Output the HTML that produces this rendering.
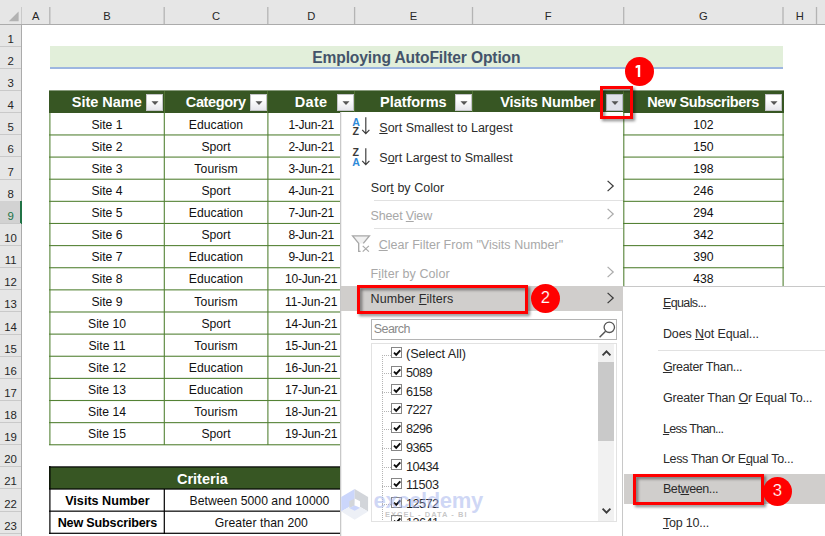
<!DOCTYPE html>
<html><head><meta charset="utf-8"><title>AutoFilter</title>
<style>
html,body{margin:0;padding:0;background:#fff;}
#s{position:relative;width:825px;height:536px;overflow:hidden;background:#fff;font-family:"Liberation Sans",sans-serif;}
#s div,#s span,#s svg{position:absolute;display:block;}
#s span{white-space:pre;transform-origin:0 50%;}
#s u{text-decoration:underline;text-underline-offset:0.6px;text-decoration-thickness:1px;}
</style></head><body><div id="s">
<div style="left:0.00px;top:0.00px;width:825.00px;height:24.00px;background:#e6e6e6"></div>
<div style="left:0.00px;top:24.00px;width:21.00px;height:512.00px;background:#e6e6e6"></div>
<div style="left:0.00px;top:24.00px;width:825.00px;height:1.00px;background:#ababab"></div>
<div style="left:21.00px;top:7.00px;width:1.00px;height:17.00px;background:#c9c9c9"></div>
<div style="left:21.00px;top:24.00px;width:1.00px;height:512.00px;background:#ababab"></div>
<svg style="left:8px;top:10px" width="12" height="12" viewBox="0 0 12 12"><path d="M10.6 1.4V11.2H0.8Z" fill="#b2b2b2"/></svg>
<div style="left:49.00px;top:7.00px;width:1.00px;height:17.00px;background:rgba(180,180,180,0.85)"></div>
<div style="left:50.00px;top:7.00px;width:1.00px;height:17.00px;background:rgba(180,180,180,0.45)"></div>
<span style="left:32.01px;top:11.02px;font-size:11.2px;line-height:11.2px;font-weight:normal;color:#262626;">A</span>
<div style="left:163.00px;top:7.00px;width:1.00px;height:17.00px;background:rgba(180,180,180,0.45)"></div>
<div style="left:164.00px;top:7.00px;width:1.00px;height:17.00px;background:rgba(180,180,180,0.85)"></div>
<span style="left:103.26px;top:11.02px;font-size:11.2px;line-height:11.2px;font-weight:normal;color:#262626;">B</span>
<div style="left:267.00px;top:7.00px;width:1.00px;height:17.00px;background:rgba(180,180,180,0.85)"></div>
<div style="left:268.00px;top:7.00px;width:1.00px;height:17.00px;background:rgba(180,180,180,0.45)"></div>
<span style="left:211.96px;top:11.02px;font-size:11.2px;line-height:11.2px;font-weight:normal;color:#262626;">C</span>
<div style="left:353.00px;top:7.00px;width:1.00px;height:17.00px;background:rgba(180,180,180,0.05)"></div>
<div style="left:354.00px;top:7.00px;width:1.00px;height:17.00px;background:rgba(180,180,180,1.00)"></div>
<div style="left:355.00px;top:7.00px;width:1.00px;height:17.00px;background:rgba(180,180,180,0.25)"></div>
<span style="left:307.16px;top:11.02px;font-size:11.2px;line-height:11.2px;font-weight:normal;color:#262626;">D</span>
<div style="left:471.00px;top:7.00px;width:1.00px;height:17.00px;background:rgba(180,180,180,0.15)"></div>
<div style="left:472.00px;top:7.00px;width:1.00px;height:17.00px;background:rgba(180,180,180,1.00)"></div>
<div style="left:473.00px;top:7.00px;width:1.00px;height:17.00px;background:rgba(180,180,180,0.15)"></div>
<span style="left:409.81px;top:11.02px;font-size:11.2px;line-height:11.2px;font-weight:normal;color:#262626;">E</span>
<div style="left:623.00px;top:7.00px;width:1.00px;height:17.00px;background:rgba(180,180,180,0.95)"></div>
<div style="left:624.00px;top:7.00px;width:1.00px;height:17.00px;background:rgba(180,180,180,0.35)"></div>
<span style="left:544.68px;top:11.02px;font-size:11.2px;line-height:11.2px;font-weight:normal;color:#262626;">F</span>
<div style="left:782.00px;top:7.00px;width:1.00px;height:17.00px;background:rgba(180,180,180,0.65)"></div>
<div style="left:783.00px;top:7.00px;width:1.00px;height:17.00px;background:rgba(180,180,180,0.65)"></div>
<span style="left:698.99px;top:11.02px;font-size:11.2px;line-height:11.2px;font-weight:normal;color:#262626;">G</span>
<div style="left:815.00px;top:7.00px;width:1.00px;height:17.00px;background:rgba(180,180,180,0.15)"></div>
<div style="left:816.00px;top:7.00px;width:1.00px;height:17.00px;background:rgba(180,180,180,1.00)"></div>
<div style="left:817.00px;top:7.00px;width:1.00px;height:17.00px;background:rgba(180,180,180,0.15)"></div>
<span style="left:795.71px;top:11.02px;font-size:11.2px;line-height:11.2px;font-weight:normal;color:#262626;">H</span>
<div style="left:0.00px;top:46.00px;width:21.00px;height:1.00px;background:#c9c9c9"></div>
<span style="left:7.43px;top:33.85px;font-size:11.4px;line-height:11.4px;font-weight:normal;color:#262626;">1</span>
<div style="left:0.00px;top:68.00px;width:21.00px;height:1.00px;background:#c9c9c9"></div>
<span style="left:7.43px;top:55.85px;font-size:11.4px;line-height:11.4px;font-weight:normal;color:#262626;">2</span>
<div style="left:0.00px;top:90.00px;width:21.00px;height:1.00px;background:#c9c9c9"></div>
<span style="left:7.43px;top:77.85px;font-size:11.4px;line-height:11.4px;font-weight:normal;color:#262626;">3</span>
<div style="left:0.00px;top:112.00px;width:21.00px;height:1.00px;background:#c9c9c9"></div>
<span style="left:7.43px;top:99.85px;font-size:11.4px;line-height:11.4px;font-weight:normal;color:#262626;">4</span>
<div style="left:0.00px;top:134.00px;width:21.00px;height:1.00px;background:#c9c9c9"></div>
<span style="left:7.43px;top:121.85px;font-size:11.4px;line-height:11.4px;font-weight:normal;color:#262626;">5</span>
<div style="left:0.00px;top:156.00px;width:21.00px;height:1.00px;background:#c9c9c9"></div>
<span style="left:7.43px;top:143.85px;font-size:11.4px;line-height:11.4px;font-weight:normal;color:#262626;">6</span>
<div style="left:0.00px;top:179.00px;width:21.00px;height:1.00px;background:#c9c9c9"></div>
<span style="left:7.43px;top:166.85px;font-size:11.4px;line-height:11.4px;font-weight:normal;color:#262626;">7</span>
<div style="left:0.00px;top:201.00px;width:21.00px;height:1.00px;background:#c9c9c9"></div>
<span style="left:7.43px;top:188.85px;font-size:11.4px;line-height:11.4px;font-weight:normal;color:#262626;">8</span>
<div style="left:0.00px;top:201.00px;width:20.00px;height:22.00px;background:#d2d2d2"></div>
<div style="left:20.00px;top:201.00px;width:2.00px;height:23.00px;background:#217346"></div>
<div style="left:0.00px;top:223.00px;width:21.00px;height:1.00px;background:#c9c9c9"></div>
<span style="left:7.43px;top:210.85px;font-size:11.4px;line-height:11.4px;font-weight:normal;color:#217346;">9</span>
<div style="left:0.00px;top:245.00px;width:21.00px;height:1.00px;background:#c9c9c9"></div>
<span style="left:4.26px;top:232.85px;font-size:11.4px;line-height:11.4px;font-weight:normal;color:#262626;">10</span>
<div style="left:0.00px;top:267.00px;width:21.00px;height:1.00px;background:#c9c9c9"></div>
<span style="left:4.68px;top:254.85px;font-size:11.4px;line-height:11.4px;font-weight:normal;color:#262626;">11</span>
<div style="left:0.00px;top:289.00px;width:21.00px;height:1.00px;background:#c9c9c9"></div>
<span style="left:4.26px;top:276.85px;font-size:11.4px;line-height:11.4px;font-weight:normal;color:#262626;">12</span>
<div style="left:0.00px;top:311.00px;width:21.00px;height:1.00px;background:#c9c9c9"></div>
<span style="left:4.26px;top:298.85px;font-size:11.4px;line-height:11.4px;font-weight:normal;color:#262626;">13</span>
<div style="left:0.00px;top:334.00px;width:21.00px;height:1.00px;background:#c9c9c9"></div>
<span style="left:4.26px;top:321.85px;font-size:11.4px;line-height:11.4px;font-weight:normal;color:#262626;">14</span>
<div style="left:0.00px;top:356.00px;width:21.00px;height:1.00px;background:#c9c9c9"></div>
<span style="left:4.26px;top:343.85px;font-size:11.4px;line-height:11.4px;font-weight:normal;color:#262626;">15</span>
<div style="left:0.00px;top:378.00px;width:21.00px;height:1.00px;background:#c9c9c9"></div>
<span style="left:4.26px;top:365.85px;font-size:11.4px;line-height:11.4px;font-weight:normal;color:#262626;">16</span>
<div style="left:0.00px;top:400.00px;width:21.00px;height:1.00px;background:#c9c9c9"></div>
<span style="left:4.26px;top:387.85px;font-size:11.4px;line-height:11.4px;font-weight:normal;color:#262626;">17</span>
<div style="left:0.00px;top:422.00px;width:21.00px;height:1.00px;background:#c9c9c9"></div>
<span style="left:4.26px;top:409.85px;font-size:11.4px;line-height:11.4px;font-weight:normal;color:#262626;">18</span>
<div style="left:0.00px;top:444.00px;width:21.00px;height:1.00px;background:#c9c9c9"></div>
<span style="left:4.26px;top:431.85px;font-size:11.4px;line-height:11.4px;font-weight:normal;color:#262626;">19</span>
<div style="left:0.00px;top:466.00px;width:21.00px;height:1.00px;background:#c9c9c9"></div>
<span style="left:4.26px;top:453.85px;font-size:11.4px;line-height:11.4px;font-weight:normal;color:#262626;">20</span>
<div style="left:0.00px;top:488.00px;width:21.00px;height:1.00px;background:#c9c9c9"></div>
<span style="left:4.26px;top:475.85px;font-size:11.4px;line-height:11.4px;font-weight:normal;color:#262626;">21</span>
<div style="left:0.00px;top:511.00px;width:21.00px;height:1.00px;background:#c9c9c9"></div>
<span style="left:4.26px;top:498.85px;font-size:11.4px;line-height:11.4px;font-weight:normal;color:#262626;">22</span>
<div style="left:0.00px;top:533.00px;width:21.00px;height:1.00px;background:#c9c9c9"></div>
<span style="left:4.26px;top:520.85px;font-size:11.4px;line-height:11.4px;font-weight:normal;color:#262626;">23</span>
<div style="left:0.00px;top:555.00px;width:21.00px;height:1.00px;background:#c9c9c9"></div>
<div style="left:50.00px;top:46.00px;width:733.00px;height:21.00px;background:#e2efda"></div>
<div style="left:50.00px;top:67.00px;width:733.00px;height:2.00px;background:#9db6e0"></div>
<span style="left:312.25px;top:49.74px;font-size:15.6px;line-height:15.6px;font-weight:bold;color:#44546a;letter-spacing:-0.130px;">Employing AutoFilter Option</span>
<div style="left:49.00px;top:91.00px;width:735.00px;height:22.00px;background:#375623"></div>
<div style="left:49.00px;top:90.00px;width:735.00px;height:1.00px;background:rgba(55,86,35,0.6)"></div>
<span style="left:71.80px;top:95.23px;font-size:14.5px;line-height:14.5px;font-weight:bold;color:#ffffff;letter-spacing:-0.014px;">Site Name</span>
<div style="left:146px;top:94px;width:15px;height:15px;background:linear-gradient(#ffffff 30%,#e6e6ec);border:1px solid #c4c4c8;"></div>
<svg style="left:150.5px;top:101px" width="8" height="5" viewBox="0 0 8 5"><path d="M0.5 0.3H7.5L4 4Z" fill="#555555"/></svg>
<span style="left:185.80px;top:95.23px;font-size:14.5px;line-height:14.5px;font-weight:bold;color:#ffffff;letter-spacing:-0.380px;">Category</span>
<div style="left:250px;top:94px;width:15px;height:15px;background:linear-gradient(#ffffff 30%,#e6e6ec);border:1px solid #c4c4c8;"></div>
<svg style="left:254.5px;top:101px" width="8" height="5" viewBox="0 0 8 5"><path d="M0.5 0.3H7.5L4 4Z" fill="#555555"/></svg>
<span style="left:294.75px;top:95.23px;font-size:14.5px;line-height:14.5px;font-weight:bold;color:#ffffff;letter-spacing:0.306px;">Date</span>
<div style="left:337px;top:94px;width:15px;height:15px;background:linear-gradient(#ffffff 30%,#e6e6ec);border:1px solid #c4c4c8;"></div>
<svg style="left:341.5px;top:101px" width="8" height="5" viewBox="0 0 8 5"><path d="M0.5 0.3H7.5L4 4Z" fill="#555555"/></svg>
<span style="left:380.10px;top:95.23px;font-size:14.5px;line-height:14.5px;font-weight:bold;color:#ffffff;letter-spacing:-0.045px;">Platforms</span>
<div style="left:455px;top:94px;width:15px;height:15px;background:linear-gradient(#ffffff 30%,#e6e6ec);border:1px solid #c4c4c8;"></div>
<svg style="left:459.5px;top:101px" width="8" height="5" viewBox="0 0 8 5"><path d="M0.5 0.3H7.5L4 4Z" fill="#555555"/></svg>
<span style="left:500.20px;top:95.23px;font-size:14.5px;line-height:14.5px;font-weight:bold;color:#ffffff;letter-spacing:-0.147px;">Visits Number</span>
<div style="left:606px;top:94px;width:15px;height:15px;background:#e0e1ea;border:1px solid #b4b5c2;"></div>
<svg style="left:610.5px;top:101px" width="8" height="5" viewBox="0 0 8 5"><path d="M0.5 0.3H7.5L4 4Z" fill="#555555"/></svg>
<span style="left:647.25px;top:95.23px;font-size:14.5px;line-height:14.5px;font-weight:bold;color:#ffffff;letter-spacing:-0.404px;">New Subscribers</span>
<div style="left:765px;top:94px;width:15px;height:15px;background:linear-gradient(#ffffff 30%,#e6e6ec);border:1px solid #c4c4c8;"></div>
<svg style="left:769.5px;top:101px" width="8" height="5" viewBox="0 0 8 5"><path d="M0.5 0.3H7.5L4 4Z" fill="#555555"/></svg>
<div style="left:49.00px;top:134.00px;width:735.00px;height:1.00px;background:rgba(84,130,53,0.60)"></div>
<div style="left:49.00px;top:135.00px;width:735.00px;height:1.00px;background:rgba(84,130,53,0.50)"></div>
<span style="left:91.40px;top:119.17px;font-size:12.2px;line-height:12.2px;font-weight:normal;color:#111111;">Site 1</span>
<span style="left:188.87px;top:119.17px;font-size:12.2px;line-height:12.2px;font-weight:normal;color:#111111;">Education</span>
<span style="left:288.40px;top:119.34px;font-size:12.0px;line-height:12.0px;font-weight:normal;color:#111111;letter-spacing:-0.235px;">1-Jun-21</span>
<span style="left:693.17px;top:119.17px;font-size:12.2px;line-height:12.2px;font-weight:normal;color:#111111;">102</span>
<div style="left:49.00px;top:156.00px;width:735.00px;height:1.00px;background:rgba(84,130,53,0.47)"></div>
<div style="left:49.00px;top:157.00px;width:735.00px;height:1.00px;background:rgba(84,130,53,0.63)"></div>
<span style="left:91.40px;top:141.17px;font-size:12.2px;line-height:12.2px;font-weight:normal;color:#111111;">Site 2</span>
<span style="left:201.42px;top:141.17px;font-size:12.2px;line-height:12.2px;font-weight:normal;color:#111111;">Sport</span>
<span style="left:288.40px;top:141.34px;font-size:12.0px;line-height:12.0px;font-weight:normal;color:#111111;letter-spacing:-0.235px;">2-Jun-21</span>
<span style="left:693.17px;top:141.17px;font-size:12.2px;line-height:12.2px;font-weight:normal;color:#111111;">150</span>
<div style="left:49.00px;top:178.00px;width:735.00px;height:1.00px;background:rgba(84,130,53,0.34)"></div>
<div style="left:49.00px;top:179.00px;width:735.00px;height:1.00px;background:rgba(84,130,53,0.76)"></div>
<span style="left:91.40px;top:163.17px;font-size:12.2px;line-height:12.2px;font-weight:normal;color:#111111;">Site 3</span>
<span style="left:194.35px;top:163.17px;font-size:12.2px;line-height:12.2px;font-weight:normal;color:#111111;letter-spacing:0.091px;">Tourism</span>
<span style="left:288.40px;top:163.34px;font-size:12.0px;line-height:12.0px;font-weight:normal;color:#111111;letter-spacing:-0.235px;">3-Jun-21</span>
<span style="left:693.17px;top:163.17px;font-size:12.2px;line-height:12.2px;font-weight:normal;color:#111111;">198</span>
<div style="left:49.00px;top:200.00px;width:735.00px;height:1.00px;background:rgba(84,130,53,0.21)"></div>
<div style="left:49.00px;top:201.00px;width:735.00px;height:1.00px;background:rgba(84,130,53,0.89)"></div>
<span style="left:91.40px;top:185.17px;font-size:12.2px;line-height:12.2px;font-weight:normal;color:#111111;">Site 4</span>
<span style="left:201.42px;top:185.17px;font-size:12.2px;line-height:12.2px;font-weight:normal;color:#111111;">Sport</span>
<span style="left:288.40px;top:185.34px;font-size:12.0px;line-height:12.0px;font-weight:normal;color:#111111;letter-spacing:-0.235px;">4-Jun-21</span>
<span style="left:693.17px;top:185.17px;font-size:12.2px;line-height:12.2px;font-weight:normal;color:#111111;">246</span>
<div style="left:49.00px;top:222.00px;width:735.00px;height:1.00px;background:rgba(84,130,53,0.08)"></div>
<div style="left:49.00px;top:223.00px;width:735.00px;height:1.00px;background:rgba(84,130,53,1.00)"></div>
<span style="left:91.40px;top:207.17px;font-size:12.2px;line-height:12.2px;font-weight:normal;color:#111111;">Site 5</span>
<span style="left:188.87px;top:207.17px;font-size:12.2px;line-height:12.2px;font-weight:normal;color:#111111;">Education</span>
<span style="left:288.40px;top:207.34px;font-size:12.0px;line-height:12.0px;font-weight:normal;color:#111111;letter-spacing:-0.235px;">7-Jun-21</span>
<span style="left:693.17px;top:207.17px;font-size:12.2px;line-height:12.2px;font-weight:normal;color:#111111;">294</span>
<div style="left:49.00px;top:245.00px;width:735.00px;height:1.00px;background:rgba(84,130,53,0.95)"></div>
<div style="left:49.00px;top:246.00px;width:735.00px;height:1.00px;background:rgba(84,130,53,0.15)"></div>
<span style="left:91.40px;top:229.17px;font-size:12.2px;line-height:12.2px;font-weight:normal;color:#111111;">Site 6</span>
<span style="left:201.42px;top:229.17px;font-size:12.2px;line-height:12.2px;font-weight:normal;color:#111111;">Sport</span>
<span style="left:288.40px;top:229.34px;font-size:12.0px;line-height:12.0px;font-weight:normal;color:#111111;letter-spacing:-0.235px;">8-Jun-21</span>
<span style="left:693.17px;top:229.17px;font-size:12.2px;line-height:12.2px;font-weight:normal;color:#111111;">342</span>
<div style="left:49.00px;top:267.00px;width:735.00px;height:1.00px;background:rgba(84,130,53,0.82)"></div>
<div style="left:49.00px;top:268.00px;width:735.00px;height:1.00px;background:rgba(84,130,53,0.28)"></div>
<span style="left:91.40px;top:251.17px;font-size:12.2px;line-height:12.2px;font-weight:normal;color:#111111;">Site 7</span>
<span style="left:188.87px;top:251.17px;font-size:12.2px;line-height:12.2px;font-weight:normal;color:#111111;">Education</span>
<span style="left:288.40px;top:251.34px;font-size:12.0px;line-height:12.0px;font-weight:normal;color:#111111;letter-spacing:-0.235px;">9-Jun-21</span>
<span style="left:693.17px;top:251.17px;font-size:12.2px;line-height:12.2px;font-weight:normal;color:#111111;">390</span>
<div style="left:49.00px;top:289.00px;width:735.00px;height:1.00px;background:rgba(84,130,53,0.69)"></div>
<div style="left:49.00px;top:290.00px;width:735.00px;height:1.00px;background:rgba(84,130,53,0.41)"></div>
<span style="left:91.40px;top:273.17px;font-size:12.2px;line-height:12.2px;font-weight:normal;color:#111111;">Site 8</span>
<span style="left:188.87px;top:273.17px;font-size:12.2px;line-height:12.2px;font-weight:normal;color:#111111;">Education</span>
<span style="left:285.10px;top:273.34px;font-size:12.0px;line-height:12.0px;font-weight:normal;color:#111111;letter-spacing:-0.216px;">10-Jun-21</span>
<span style="left:693.17px;top:273.17px;font-size:12.2px;line-height:12.2px;font-weight:normal;color:#111111;">438</span>
<div style="left:49.00px;top:311.00px;width:735.00px;height:1.00px;background:rgba(84,130,53,0.56)"></div>
<div style="left:49.00px;top:312.00px;width:735.00px;height:1.00px;background:rgba(84,130,53,0.54)"></div>
<span style="left:91.40px;top:296.17px;font-size:12.2px;line-height:12.2px;font-weight:normal;color:#111111;">Site 9</span>
<span style="left:194.35px;top:296.17px;font-size:12.2px;line-height:12.2px;font-weight:normal;color:#111111;letter-spacing:0.091px;">Tourism</span>
<span style="left:285.10px;top:296.34px;font-size:12.0px;line-height:12.0px;font-weight:normal;color:#111111;letter-spacing:-0.111px;">11-Jun-21</span>
<span style="left:693.17px;top:296.17px;font-size:12.2px;line-height:12.2px;font-weight:normal;color:#111111;">486</span>
<div style="left:49.00px;top:333.00px;width:735.00px;height:1.00px;background:rgba(84,130,53,0.43)"></div>
<div style="left:49.00px;top:334.00px;width:735.00px;height:1.00px;background:rgba(84,130,53,0.67)"></div>
<span style="left:88.01px;top:318.17px;font-size:12.2px;line-height:12.2px;font-weight:normal;color:#111111;">Site 10</span>
<span style="left:201.42px;top:318.17px;font-size:12.2px;line-height:12.2px;font-weight:normal;color:#111111;">Sport</span>
<span style="left:285.10px;top:318.34px;font-size:12.0px;line-height:12.0px;font-weight:normal;color:#111111;letter-spacing:-0.216px;">14-Jun-21</span>
<span style="left:693.17px;top:318.17px;font-size:12.2px;line-height:12.2px;font-weight:normal;color:#111111;">534</span>
<div style="left:49.00px;top:355.00px;width:735.00px;height:1.00px;background:rgba(84,130,53,0.30)"></div>
<div style="left:49.00px;top:356.00px;width:735.00px;height:1.00px;background:rgba(84,130,53,0.80)"></div>
<span style="left:88.46px;top:340.17px;font-size:12.2px;line-height:12.2px;font-weight:normal;color:#111111;">Site 11</span>
<span style="left:194.35px;top:340.17px;font-size:12.2px;line-height:12.2px;font-weight:normal;color:#111111;letter-spacing:0.091px;">Tourism</span>
<span style="left:285.10px;top:340.34px;font-size:12.0px;line-height:12.0px;font-weight:normal;color:#111111;letter-spacing:-0.216px;">15-Jun-21</span>
<span style="left:693.17px;top:340.17px;font-size:12.2px;line-height:12.2px;font-weight:normal;color:#111111;">582</span>
<div style="left:49.00px;top:377.00px;width:735.00px;height:1.00px;background:rgba(84,130,53,0.17)"></div>
<div style="left:49.00px;top:378.00px;width:735.00px;height:1.00px;background:rgba(84,130,53,0.93)"></div>
<span style="left:88.01px;top:362.17px;font-size:12.2px;line-height:12.2px;font-weight:normal;color:#111111;">Site 12</span>
<span style="left:188.87px;top:362.17px;font-size:12.2px;line-height:12.2px;font-weight:normal;color:#111111;">Education</span>
<span style="left:285.10px;top:362.34px;font-size:12.0px;line-height:12.0px;font-weight:normal;color:#111111;letter-spacing:-0.216px;">16-Jun-21</span>
<span style="left:693.17px;top:362.17px;font-size:12.2px;line-height:12.2px;font-weight:normal;color:#111111;">630</span>
<div style="left:49.00px;top:399.00px;width:735.00px;height:1.00px;background:rgba(84,130,53,0.04)"></div>
<div style="left:49.00px;top:400.00px;width:735.00px;height:1.00px;background:rgba(84,130,53,1.00)"></div>
<div style="left:49.00px;top:401.00px;width:735.00px;height:1.00px;background:rgba(84,130,53,0.06)"></div>
<span style="left:88.01px;top:384.17px;font-size:12.2px;line-height:12.2px;font-weight:normal;color:#111111;">Site 13</span>
<span style="left:188.87px;top:384.17px;font-size:12.2px;line-height:12.2px;font-weight:normal;color:#111111;">Education</span>
<span style="left:285.10px;top:384.34px;font-size:12.0px;line-height:12.0px;font-weight:normal;color:#111111;letter-spacing:-0.216px;">17-Jun-21</span>
<span style="left:693.17px;top:384.17px;font-size:12.2px;line-height:12.2px;font-weight:normal;color:#111111;">678</span>
<div style="left:49.00px;top:422.00px;width:735.00px;height:1.00px;background:rgba(84,130,53,0.91)"></div>
<div style="left:49.00px;top:423.00px;width:735.00px;height:1.00px;background:rgba(84,130,53,0.19)"></div>
<span style="left:88.01px;top:406.17px;font-size:12.2px;line-height:12.2px;font-weight:normal;color:#111111;">Site 14</span>
<span style="left:194.35px;top:406.17px;font-size:12.2px;line-height:12.2px;font-weight:normal;color:#111111;letter-spacing:0.091px;">Tourism</span>
<span style="left:285.10px;top:406.34px;font-size:12.0px;line-height:12.0px;font-weight:normal;color:#111111;letter-spacing:-0.216px;">18-Jun-21</span>
<span style="left:693.17px;top:406.17px;font-size:12.2px;line-height:12.2px;font-weight:normal;color:#111111;">726</span>
<div style="left:49.00px;top:444.00px;width:735.00px;height:1.00px;background:rgba(84,130,53,0.78)"></div>
<div style="left:49.00px;top:445.00px;width:735.00px;height:1.00px;background:rgba(84,130,53,0.32)"></div>
<span style="left:88.01px;top:428.17px;font-size:12.2px;line-height:12.2px;font-weight:normal;color:#111111;">Site 15</span>
<span style="left:201.42px;top:428.17px;font-size:12.2px;line-height:12.2px;font-weight:normal;color:#111111;">Sport</span>
<span style="left:285.10px;top:428.34px;font-size:12.0px;line-height:12.0px;font-weight:normal;color:#111111;letter-spacing:-0.216px;">19-Jun-21</span>
<span style="left:693.17px;top:428.17px;font-size:12.2px;line-height:12.2px;font-weight:normal;color:#111111;">774</span>
<div style="left:49.00px;top:113.00px;width:1.00px;height:332.27px;background:rgba(84,130,53,0.65)"></div>
<div style="left:50.00px;top:113.00px;width:1.00px;height:332.27px;background:rgba(84,130,53,0.45)"></div>
<div style="left:163.00px;top:113.00px;width:1.00px;height:332.27px;background:rgba(84,130,53,0.25)"></div>
<div style="left:164.00px;top:113.00px;width:1.00px;height:332.27px;background:rgba(84,130,53,0.85)"></div>
<div style="left:164.00px;top:91.00px;width:1.00px;height:22.00px;background:#4f7133"></div>
<div style="left:267.00px;top:113.00px;width:1.00px;height:332.27px;background:rgba(84,130,53,0.65)"></div>
<div style="left:268.00px;top:113.00px;width:1.00px;height:332.27px;background:rgba(84,130,53,0.45)"></div>
<div style="left:267.00px;top:91.00px;width:1.00px;height:22.00px;background:#4f7133"></div>
<div style="left:354.00px;top:113.00px;width:1.00px;height:332.27px;background:rgba(84,130,53,0.85)"></div>
<div style="left:355.00px;top:113.00px;width:1.00px;height:332.27px;background:rgba(84,130,53,0.25)"></div>
<div style="left:354.00px;top:91.00px;width:1.00px;height:22.00px;background:#4f7133"></div>
<div style="left:472.00px;top:113.00px;width:1.00px;height:332.27px;background:rgba(84,130,53,0.95)"></div>
<div style="left:473.00px;top:113.00px;width:1.00px;height:332.27px;background:rgba(84,130,53,0.15)"></div>
<div style="left:472.00px;top:91.00px;width:1.00px;height:22.00px;background:#4f7133"></div>
<div style="left:623.00px;top:113.00px;width:1.00px;height:332.27px;background:rgba(84,130,53,0.75)"></div>
<div style="left:624.00px;top:113.00px;width:1.00px;height:332.27px;background:rgba(84,130,53,0.35)"></div>
<div style="left:623.00px;top:91.00px;width:1.00px;height:22.00px;background:#4f7133"></div>
<div style="left:782.00px;top:113.00px;width:1.00px;height:332.27px;background:rgba(84,130,53,0.45)"></div>
<div style="left:783.00px;top:113.00px;width:1.00px;height:332.27px;background:rgba(84,130,53,0.65)"></div>
<div style="left:49.00px;top:467.00px;width:306.00px;height:22.00px;background:#375623"></div>
<div style="left:49.00px;top:466.00px;width:306.00px;height:1.00px;background:rgba(0,0,0,0.70)"></div>
<div style="left:49.00px;top:467.00px;width:306.00px;height:1.00px;background:rgba(0,0,0,0.50)"></div>
<div style="left:49.00px;top:488.00px;width:306.00px;height:1.00px;background:rgba(0,0,0,0.57)"></div>
<div style="left:49.00px;top:489.00px;width:306.00px;height:1.00px;background:rgba(0,0,0,0.63)"></div>
<div style="left:49.00px;top:510.00px;width:306.00px;height:1.00px;background:rgba(0,0,0,0.44)"></div>
<div style="left:49.00px;top:511.00px;width:306.00px;height:1.00px;background:rgba(0,0,0,0.76)"></div>
<div style="left:49.00px;top:532.00px;width:306.00px;height:1.00px;background:rgba(0,0,0,0.31)"></div>
<div style="left:49.00px;top:533.00px;width:306.00px;height:1.00px;background:rgba(0,0,0,0.89)"></div>
<div style="left:49.00px;top:466.30px;width:1.00px;height:67.59px;background:rgba(0,0,0,0.70)"></div>
<div style="left:50.00px;top:466.30px;width:1.00px;height:67.59px;background:rgba(0,0,0,0.50)"></div>
<div style="left:163.00px;top:488.93px;width:1.00px;height:44.96px;background:rgba(0,0,0,0.30)"></div>
<div style="left:164.00px;top:488.93px;width:1.00px;height:44.96px;background:rgba(0,0,0,0.90)"></div>
<div style="left:354.00px;top:466.30px;width:1.00px;height:67.59px;background:rgba(0,0,0,1.00)"></div>
<div style="left:355.00px;top:466.30px;width:1.00px;height:67.59px;background:rgba(0,0,0,0.20)"></div>
<span style="left:176.90px;top:472.23px;font-size:14.5px;line-height:14.5px;font-weight:bold;color:#ffffff;letter-spacing:0.030px;">Criteria</span>
<span style="left:65.20px;top:494.83px;font-size:12.6px;line-height:12.6px;font-weight:bold;color:#000;letter-spacing:0.008px;">Visits Number</span>
<span style="left:57.70px;top:516.83px;font-size:12.6px;line-height:12.6px;font-weight:bold;color:#000;letter-spacing:-0.182px;">New Subscribers</span>
<span style="left:189.55px;top:495.17px;font-size:12.2px;line-height:12.2px;font-weight:normal;color:#111;letter-spacing:0.039px;">Between 5000 and 10000</span>
<span style="left:214.80px;top:517.17px;font-size:12.2px;line-height:12.2px;font-weight:normal;color:#111;letter-spacing:0.062px;">Greater than 200</span>
<div style="left:340.00px;top:112.00px;width:283.00px;height:424.00px;background:#ffffff;border-left:1px solid #c8c8c8;box-sizing:border-box"></div>
<div style="left:341.00px;top:112.00px;width:1.00px;height:424.00px;background:#f0f0f0"></div>
<span style="left:379.30px;top:121.92px;font-size:12.5px;line-height:12.5px;font-weight:normal;color:#2b2b2b;letter-spacing:-0.004px;"><u>S</u>ort Smallest to Largest</span>
<span style="left:379.30px;top:151.92px;font-size:12.5px;line-height:12.5px;font-weight:normal;color:#2b2b2b;letter-spacing:-0.004px;">S<u>o</u>rt Largest to Smallest</span>
<span style="left:370.80px;top:181.92px;font-size:12.5px;line-height:12.5px;font-weight:normal;color:#2b2b2b;letter-spacing:0.036px;">Sor<u>t</u> by Color</span>
<div style="left:374.00px;top:200.00px;width:249.00px;height:1.00px;background:#e1e1e1"></div>
<span style="left:370.60px;top:209.92px;font-size:12.5px;line-height:12.5px;font-weight:normal;color:#a8a8a8;letter-spacing:-0.159px;">Sheet <u>V</u>iew</span>
<div style="left:374.00px;top:228.00px;width:249.00px;height:1.00px;background:#e1e1e1"></div>
<span style="left:378.70px;top:238.92px;font-size:12.5px;line-height:12.5px;font-weight:normal;color:#a8a8a8;letter-spacing:0.025px;"><u>C</u>lear Filter From "Visits Number"</span>
<span style="left:370.60px;top:267.92px;font-size:12.5px;line-height:12.5px;font-weight:normal;color:#a8a8a8;letter-spacing:0.090px;">F<u>i</u>lter by Color</span>
<div style="left:341.00px;top:286.00px;width:281.00px;height:25.00px;background:#d0cecc"></div>
<span style="left:370.60px;top:292.92px;font-size:12.5px;line-height:12.5px;font-weight:normal;color:#2b2b2b;letter-spacing:0.047px;">Number <u>F</u>ilters</span>
<svg style="left:606px;top:179.5px" width="9" height="12" viewBox="0 0 9 12"><path d="M1.6 0.9L7.2 6L1.6 11.1" fill="none" stroke="#3a3a3a" stroke-width="1.25"/></svg>
<svg style="left:606px;top:207.5px" width="9" height="12" viewBox="0 0 9 12"><path d="M1.6 0.9L7.2 6L1.6 11.1" fill="none" stroke="#ababab" stroke-width="1.25"/></svg>
<svg style="left:606px;top:265.6px" width="9" height="12" viewBox="0 0 9 12"><path d="M1.6 0.9L7.2 6L1.6 11.1" fill="none" stroke="#ababab" stroke-width="1.25"/></svg>
<svg style="left:606px;top:291.8px" width="9" height="12" viewBox="0 0 9 12"><path d="M1.6 0.9L7.2 6L1.6 11.1" fill="none" stroke="#3a3a3a" stroke-width="1.25"/></svg>
<span style="left:352.30px;top:116.53px;font-size:10.6px;line-height:10.6px;font-weight:bold;color:#2f8ad8;">A</span>
<span style="left:352.60px;top:125.53px;font-size:10.6px;line-height:10.6px;font-weight:bold;color:#3a3a3a;">Z</span>
<svg style="left:361px;top:117.2px" width="10" height="18" viewBox="0 0 10 18"><path d="M4.8 0.3V16.5M1.2 12.8L4.8 16.6L8.4 12.8" fill="none" stroke="#3a3a3a" stroke-width="1.15"/></svg>
<span style="left:352.60px;top:146.53px;font-size:10.6px;line-height:10.6px;font-weight:bold;color:#3a3a3a;">Z</span>
<span style="left:352.30px;top:156.53px;font-size:10.6px;line-height:10.6px;font-weight:bold;color:#2f8ad8;">A</span>
<svg style="left:361px;top:147.8px" width="10" height="18" viewBox="0 0 10 18"><path d="M4.8 0.3V16.5M1.2 12.8L4.8 16.6L8.4 12.8" fill="none" stroke="#3a3a3a" stroke-width="1.15"/></svg>
<svg style="left:0;top:0" width="825" height="536" viewBox="0 0 825 536"><path d="M352.6 235.8H369.4L363.3 243.4H358.7Z" fill="#f1f1f1"/><path d="M363.3 243.4L369.4 235.8H352.6L358.7 243.4V251.3H360.6" fill="none" stroke="#a8a8a8" stroke-width="1.35" stroke-linejoin="miter"/><path d="M362.7 245.9L368.9 251.6M368.9 245.9L362.7 251.6" stroke="#a8a8a8" stroke-width="1.2"/></svg>
<div style="left:371.00px;top:319.00px;width:246.00px;height:21.00px;background:#fff;border:1px solid #b4b4b4;box-sizing:border-box"></div>
<span style="left:373.80px;top:322.92px;font-size:12.5px;line-height:12.5px;font-weight:normal;color:#8a8a8a;letter-spacing:-0.583px;">Search</span>
<svg style="left:597px;top:320px" width="20" height="19" viewBox="0 0 20 19"><circle cx="12.3" cy="7.3" r="5.2" fill="none" stroke="#555" stroke-width="1.3"/><path d="M8.6 11.2L2.6 17.2" stroke="#555" stroke-width="1.5"/></svg>
<div style="left:371.00px;top:343.00px;width:246.00px;height:179.00px;background:#fff;border:1px solid #e2e2e2;box-sizing:border-box"></div>
<div style="left:372px;top:344px;width:244px;height:177px;overflow:hidden">
<div style="left:10px;top:11px;width:10px;height:1px;background:repeating-linear-gradient(90deg,#b4b4b4 0 1px,transparent 1px 2px)"></div>
<div style="left:19px;top:3px;width:11px;height:11px;box-sizing:border-box;border:1px solid #868686;background:#fff"></div>
<svg style="left:20.5px;top:4.5px" width="8" height="8" viewBox="0 0 8 8"><path d="M1.0 3.6L3.2 5.9L7.3 1.3" fill="none" stroke="#0c0c0c" stroke-width="1.9"/></svg>
<span style="left:34.00px;top:3.75px;font-size:12.7px;line-height:12.7px;font-weight:normal;color:#1f1f1f;letter-spacing:-0.061px;">(Select All)</span>
<div style="left:10px;top:29px;width:10px;height:1px;background:repeating-linear-gradient(90deg,#b4b4b4 0 1px,transparent 1px 2px)"></div>
<div style="left:19px;top:22px;width:11px;height:11px;box-sizing:border-box;border:1px solid #868686;background:#fff"></div>
<svg style="left:20.5px;top:23.5px" width="8" height="8" viewBox="0 0 8 8"><path d="M1.0 3.6L3.2 5.9L7.3 1.3" fill="none" stroke="#0c0c0c" stroke-width="1.9"/></svg>
<span style="left:34.00px;top:22.75px;font-size:12.7px;line-height:12.7px;font-weight:normal;color:#1f1f1f;letter-spacing:-0.558px;">5089</span>
<div style="left:10px;top:48px;width:10px;height:1px;background:repeating-linear-gradient(90deg,#b4b4b4 0 1px,transparent 1px 2px)"></div>
<div style="left:19px;top:40px;width:11px;height:11px;box-sizing:border-box;border:1px solid #868686;background:#fff"></div>
<svg style="left:20.5px;top:41.5px" width="8" height="8" viewBox="0 0 8 8"><path d="M1.0 3.6L3.2 5.9L7.3 1.3" fill="none" stroke="#0c0c0c" stroke-width="1.9"/></svg>
<span style="left:34.00px;top:41.75px;font-size:12.7px;line-height:12.7px;font-weight:normal;color:#1f1f1f;letter-spacing:-0.558px;">6158</span>
<div style="left:10px;top:67px;width:10px;height:1px;background:repeating-linear-gradient(90deg,#b4b4b4 0 1px,transparent 1px 2px)"></div>
<div style="left:19px;top:59px;width:11px;height:11px;box-sizing:border-box;border:1px solid #868686;background:#fff"></div>
<svg style="left:20.5px;top:60.5px" width="8" height="8" viewBox="0 0 8 8"><path d="M1.0 3.6L3.2 5.9L7.3 1.3" fill="none" stroke="#0c0c0c" stroke-width="1.9"/></svg>
<span style="left:34.00px;top:59.75px;font-size:12.7px;line-height:12.7px;font-weight:normal;color:#1f1f1f;letter-spacing:-0.558px;">7227</span>
<div style="left:10px;top:85px;width:10px;height:1px;background:repeating-linear-gradient(90deg,#b4b4b4 0 1px,transparent 1px 2px)"></div>
<div style="left:19px;top:78px;width:11px;height:11px;box-sizing:border-box;border:1px solid #868686;background:#fff"></div>
<svg style="left:20.5px;top:79.5px" width="8" height="8" viewBox="0 0 8 8"><path d="M1.0 3.6L3.2 5.9L7.3 1.3" fill="none" stroke="#0c0c0c" stroke-width="1.9"/></svg>
<span style="left:34.00px;top:78.75px;font-size:12.7px;line-height:12.7px;font-weight:normal;color:#1f1f1f;letter-spacing:-0.558px;">8296</span>
<div style="left:10px;top:104px;width:10px;height:1px;background:repeating-linear-gradient(90deg,#b4b4b4 0 1px,transparent 1px 2px)"></div>
<div style="left:19px;top:96px;width:11px;height:11px;box-sizing:border-box;border:1px solid #868686;background:#fff"></div>
<svg style="left:20.5px;top:97.5px" width="8" height="8" viewBox="0 0 8 8"><path d="M1.0 3.6L3.2 5.9L7.3 1.3" fill="none" stroke="#0c0c0c" stroke-width="1.9"/></svg>
<span style="left:34.00px;top:97.75px;font-size:12.7px;line-height:12.7px;font-weight:normal;color:#1f1f1f;letter-spacing:-0.558px;">9365</span>
<div style="left:10px;top:123px;width:10px;height:1px;background:repeating-linear-gradient(90deg,#b4b4b4 0 1px,transparent 1px 2px)"></div>
<div style="left:19px;top:115px;width:11px;height:11px;box-sizing:border-box;border:1px solid #868686;background:#fff"></div>
<svg style="left:20.5px;top:116.5px" width="8" height="8" viewBox="0 0 8 8"><path d="M1.0 3.6L3.2 5.9L7.3 1.3" fill="none" stroke="#0c0c0c" stroke-width="1.9"/></svg>
<span style="left:34.00px;top:116.75px;font-size:12.7px;line-height:12.7px;font-weight:normal;color:#1f1f1f;letter-spacing:-0.559px;">10434</span>
<div style="left:10px;top:142px;width:10px;height:1px;background:repeating-linear-gradient(90deg,#b4b4b4 0 1px,transparent 1px 2px)"></div>
<div style="left:19px;top:134px;width:11px;height:11px;box-sizing:border-box;border:1px solid #868686;background:#fff"></div>
<svg style="left:20.5px;top:135.5px" width="8" height="8" viewBox="0 0 8 8"><path d="M1.0 3.6L3.2 5.9L7.3 1.3" fill="none" stroke="#0c0c0c" stroke-width="1.9"/></svg>
<span style="left:34.00px;top:134.75px;font-size:12.7px;line-height:12.7px;font-weight:normal;color:#1f1f1f;letter-spacing:-0.350px;">11503</span>
<div style="left:10px;top:160px;width:10px;height:1px;background:repeating-linear-gradient(90deg,#b4b4b4 0 1px,transparent 1px 2px)"></div>
<div style="left:19px;top:153px;width:11px;height:11px;box-sizing:border-box;border:1px solid #868686;background:#fff"></div>
<svg style="left:20.5px;top:154.5px" width="8" height="8" viewBox="0 0 8 8"><path d="M1.0 3.6L3.2 5.9L7.3 1.3" fill="none" stroke="#0c0c0c" stroke-width="1.9"/></svg>
<span style="left:34.00px;top:153.75px;font-size:12.7px;line-height:12.7px;font-weight:normal;color:#1f1f1f;letter-spacing:-0.559px;">12572</span>
<div style="left:10px;top:179px;width:10px;height:1px;background:repeating-linear-gradient(90deg,#b4b4b4 0 1px,transparent 1px 2px)"></div>
<div style="left:19px;top:171px;width:11px;height:11px;box-sizing:border-box;border:1px solid #868686;background:#fff"></div>
<svg style="left:20.5px;top:172.5px" width="8" height="8" viewBox="0 0 8 8"><path d="M1.0 3.6L3.2 5.9L7.3 1.3" fill="none" stroke="#0c0c0c" stroke-width="1.9"/></svg>
<span style="left:34.00px;top:172.75px;font-size:12.7px;line-height:12.7px;font-weight:normal;color:#1f1f1f;letter-spacing:-0.559px;">13641</span>
<div style="left:10px;top:11px;width:1px;height:170px;background:repeating-linear-gradient(180deg,#b4b4b4 0 1px,transparent 1px 2px)"></div>
</div>
<div style="left:598.00px;top:344.00px;width:16.00px;height:177.00px;background:#f1f1f1"></div>
<div style="left:598.00px;top:362.00px;width:16.00px;height:79.00px;background:#c9c9c9"></div>
<svg style="left:600.5px;top:348.5px" width="11" height="8" viewBox="0 0 11 8"><path d="M1.6 6.3L5.5 2.3L9.4 6.3" fill="none" stroke="#3c3c3c" stroke-width="1.9"/></svg>
<svg style="left:600.5px;top:507.2px" width="11" height="8" viewBox="0 0 11 8"><path d="M1.6 1.7L5.5 5.7L9.4 1.7" fill="none" stroke="#3c3c3c" stroke-width="1.9"/></svg>
<svg style="left:0;top:0" width="825" height="536" viewBox="0 0 825 536"><g transform="translate(336,484) scale(0.074627)"><path d="M250 68L70 175V370L250 263Z" fill="#cbd6fb"/><path d="M250 68L430 175V370L250 263Z" fill="#d2d5da"/><path d="M250 263L70 370L250 478L430 370Z" fill="#edf0f6"/><path d="M178 232L250 195V288L178 322Z" fill="#d3d6da"/><path d="M250 195L322 232V318L250 288Z" fill="#ffffff"/><path d="M178 322L250 288L322 318L250 360Z" fill="#cbd6fb"/></g></svg>
<span style="left:373.50px;top:489.88px;font-size:22px;line-height:22px;font-weight:bold;color:rgba(160,176,236,0.5);letter-spacing:-0.356px;">exceldemy</span>
<span style="left:385.00px;top:511.15px;font-size:7.5px;line-height:7.5px;font-weight:bold;color:rgba(150,150,150,0.55);letter-spacing:1.022px;">EXCEL - DATA - BI</span>
<div style="left:622.00px;top:286.00px;width:203.00px;height:250.00px;background:#ffffff;border-left:1px solid #c8c8c8;border-top:1px solid #c8c8c8;box-sizing:border-box"></div>
<div style="left:622.00px;top:286.00px;width:1.00px;height:25.00px;background:#d0cecc"></div>
<div style="left:624.00px;top:474.00px;width:201.00px;height:30.00px;background:#d0cecc"></div>
<div style="left:658.00px;top:350.00px;width:167.00px;height:1.00px;background:#e1e1e1"></div>
<span style="left:662.90px;top:296.92px;font-size:12.5px;line-height:12.5px;font-weight:normal;color:#2b2b2b;letter-spacing:-0.616px;"><u>E</u>quals...</span>
<span style="left:662.90px;top:327.92px;font-size:12.5px;line-height:12.5px;font-weight:normal;color:#2b2b2b;letter-spacing:-0.119px;">Does <u>N</u>ot Equal...</span>
<span style="left:662.90px;top:360.92px;font-size:12.5px;line-height:12.5px;font-weight:normal;color:#2b2b2b;letter-spacing:-0.354px;"><u>G</u>reater Than...</span>
<span style="left:662.90px;top:391.92px;font-size:12.5px;line-height:12.5px;font-weight:normal;color:#2b2b2b;letter-spacing:-0.158px;">Greater Than <u>O</u>r Equal To...</span>
<span style="left:662.90px;top:422.92px;font-size:12.5px;line-height:12.5px;font-weight:normal;color:#2b2b2b;letter-spacing:-0.675px;"><u>L</u>ess Than...</span>
<span style="left:662.90px;top:452.92px;font-size:12.5px;line-height:12.5px;font-weight:normal;color:#2b2b2b;letter-spacing:-0.307px;">Less Than Or E<u>q</u>ual To...</span>
<span style="left:662.90px;top:482.92px;font-size:12.5px;line-height:12.5px;font-weight:normal;color:#2b2b2b;letter-spacing:-0.386px;">Bet<u>w</u>een...</span>
<span style="left:662.90px;top:516.92px;font-size:12.5px;line-height:12.5px;font-weight:normal;color:#2b2b2b;letter-spacing:-0.218px;"><u>T</u>op 10...</span>
<div style="left:600px;top:86px;width:33px;height:33px;box-sizing:border-box;border:3px solid #ff0000;filter:drop-shadow(2px 2.5px 1.8px rgba(0,0,0,0.48))"></div>
<div style="left:624.7px;top:56.7px;width:29.6px;height:29.6px;border-radius:50%;background:#ff0000"></div>
<svg style="left:0;top:0" width="825" height="536" viewBox="0 0 825 536"><path transform="translate(-0.10,-0.10)" d="M637.9 65.1H640.3V77.1H637.9V67.5L635.7 68.3V66.2Z" fill="#fff"/></svg>
<div style="left:357px;top:284.5px;width:171px;height:29.0px;box-sizing:border-box;border:3px solid #ff0000;filter:drop-shadow(2px 2.5px 1.8px rgba(0,0,0,0.48))"></div>
<div style="left:530.7px;top:283.8px;width:29.6px;height:29.6px;border-radius:50%;background:#ff0000"></div>
<span style="left:540.86px;top:290.36px;font-size:16.7px;line-height:16.7px;font-weight:normal;color:#fff;-webkit-text-stroke:0.22px #ff0000;">2</span>
<div style="left:633px;top:474px;width:131px;height:31px;box-sizing:border-box;border:3px solid #ff0000;filter:drop-shadow(2px 2.5px 1.8px rgba(0,0,0,0.48))"></div>
<div style="left:762.7px;top:476.7px;width:29.6px;height:29.6px;border-radius:50%;background:#ff0000"></div>
<span style="left:772.86px;top:483.36px;font-size:16.7px;line-height:16.7px;font-weight:normal;color:#fff;-webkit-text-stroke:0.22px #ff0000;">3</span>
</div></body></html>
